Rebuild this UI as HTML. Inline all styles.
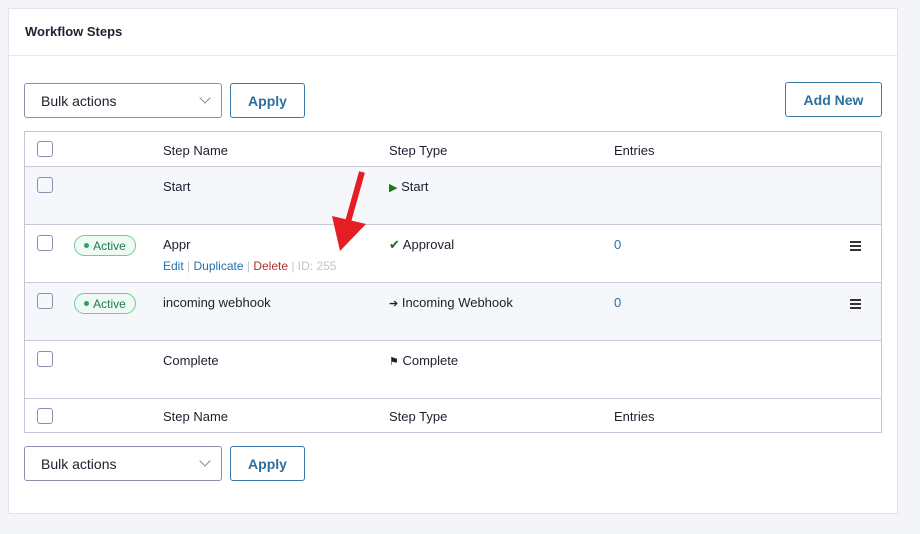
<!DOCTYPE html><html><head><style>
body{margin:0;width:920px;height:534px;background:#f3f5f9;font-family:"Liberation Sans",sans-serif;font-size:13px;color:#1e1e2e;position:relative;overflow:hidden}
.card{position:absolute;left:8px;top:8px;width:890px;height:506px;background:#fff;border:1px solid #e1e4ea;box-sizing:border-box}
.hd{height:46px;border-bottom:1px solid #e4e7ec;padding-left:16px;line-height:46px;font-weight:bold;font-size:13px;color:#1d2233}
.abs{position:absolute}
.sel{width:198px;height:35px;border:1px solid #8c8fb0;border-radius:3px;box-sizing:border-box;line-height:34px;padding-left:16px;font-size:14px}
.sel:after{content:"";position:absolute;right:12px;top:10px;width:7px;height:7px;border-right:1.5px solid #8a8a98;border-bottom:1.5px solid #8a8a98;transform:rotate(45deg)}
.btn{height:35px;border:1px solid #3a7aa8;border-radius:3px;box-sizing:border-box;line-height:34px;text-align:center;color:#2c6e9e;font-weight:bold;font-size:14px;background:#fff}
table{position:absolute;left:24px;top:131px;width:858px;border-collapse:collapse;border:1px solid #c3c4d7}
td{vertical-align:top;padding:0;position:relative}
tr{border-top:1px solid #c8cad9}
.cb{display:inline-block;width:14px;height:14px;border:1.5px solid #8c8fb0;border-radius:3px;margin:10px 0 0 12px}
.alt{background:#f5f7fa}
.badge{display:inline-block;margin-top:10px;margin-left:1px;width:62px;height:21px;border:1px solid #6fcc9a;border-radius:11px;background:#eefaf3;color:#1d7a4e;font-size:12px;line-height:20px;box-sizing:border-box;text-align:center}
.badge b{display:inline-block;width:5px;height:5px;border-radius:50%;background:#2ba362;vertical-align:middle;margin-right:4px;margin-top:-2px}
.t{padding-top:12px}
.lk{font-size:12px;margin-top:7px;color:#c3c4c7}
.lk a{color:#2271b1;text-decoration:none}
.ham{position:absolute;right:20px;top:20px;width:11px;height:2px;background:#333;box-shadow:0 -4px 0 #333,0 4px 0 #333}
</style></head><body>
<div class="card"><div class="hd">Workflow Steps</div></div>
<div class="abs sel" style="left:24px;top:83px">Bulk actions</div>
<div class="abs btn" style="left:230px;top:83px;width:75px">Apply</div>
<div class="abs btn" style="left:785px;top:82px;width:97px">Add New</div>
<table>
<tr style="height:35px;border-top:none"><td style="width:48px"><span class="cb" style="margin-top:9px"></span></td><td style="width:90px"></td><td style="width:226px;padding-top:11px">Step Name</td><td style="width:225px;padding-top:11px">Step Type</td><td style="padding-top:11px">Entries</td></tr>
<tr class="alt" style="height:58px"><td><span class="cb"></span></td><td></td><td class="t">Start</td><td class="t"><span style="color:#1a7a1a;font-size:11px">▶</span> Start</td><td></td></tr>
<tr style="height:58px"><td><span class="cb"></span></td><td><span class="badge"><b></b>Active</span></td><td class="t">Appr<div class="lk"><a>Edit</a> | <a>Duplicate</a> | <a style="color:#b32d2e">Delete</a> | ID: 255</div></td><td class="t"><span style="color:#1a6a1a">✔</span> Approval</td><td class="t"><span style="color:#2271b1">0</span><span class="ham"></span></td></tr>
<tr class="alt" style="height:58px"><td><span class="cb"></span></td><td><span class="badge"><b></b>Active</span></td><td class="t">incoming webhook</td><td class="t"><span style="font-size:11px">➔</span> Incoming Webhook</td><td class="t"><span style="color:#2271b1">0</span><span class="ham"></span></td></tr>
<tr style="height:58px"><td><span class="cb"></span></td><td></td><td class="t">Complete</td><td class="t"><span style="font-size:11px">⚑</span> Complete</td><td></td></tr>
<tr style="height:34px"><td><span class="cb" style="margin-top:9px"></span></td><td></td><td style="padding-top:10px">Step Name</td><td style="padding-top:10px">Step Type</td><td style="padding-top:10px">Entries</td></tr>
</table>
<div class="abs sel" style="left:24px;top:446px">Bulk actions</div>
<div class="abs btn" style="left:230px;top:446px;width:75px">Apply</div>
<svg class="abs" style="left:0;top:0" width="920" height="534"><line x1="362" y1="172" x2="348" y2="222" stroke="#e31e24" stroke-width="6"/><polygon points="332,216 366,224 340,251" fill="#e31e24"/></svg>
</body></html>
